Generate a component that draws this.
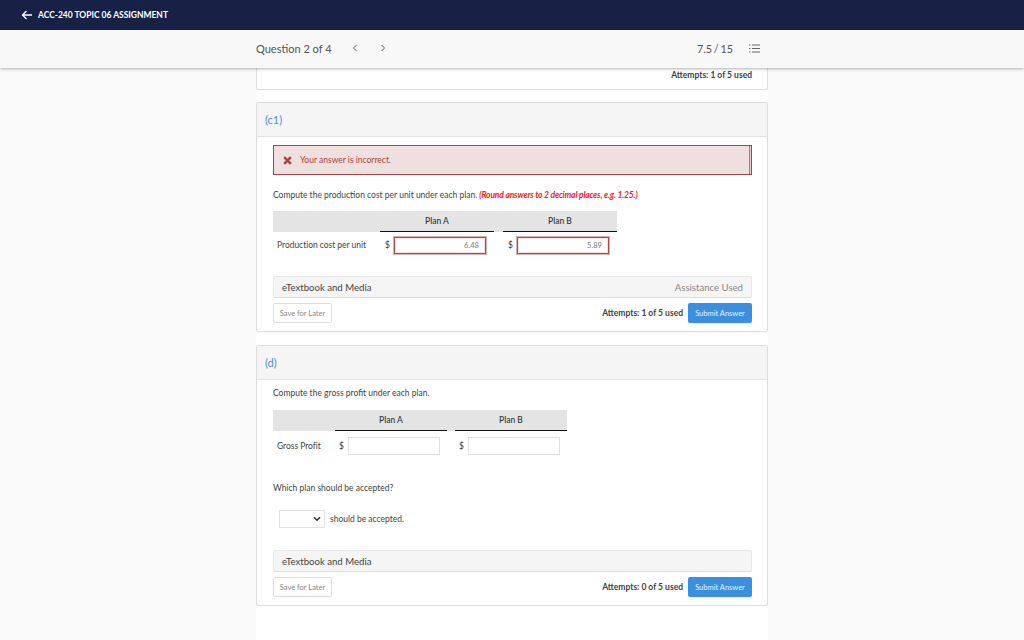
<div class="page">
  <header class="topbar">
    <svg class="back" width="12" height="10" viewBox="0 0 12 10" aria-hidden="true"><path d="M5.5 1 1.5 5l4 4M1.5 5H11" fill="none" stroke="#fff" stroke-width="1.3"/></svg>
    <span class="course">ACC-240 TOPIC 06 ASSIGNMENT</span>
  </header>

  <div class="subbar">
    <div class="subinner">
      <span class="qnum">Question 2 of 4</span>
      <svg class="chev first" width="6" height="8" viewBox="0 0 6 8" aria-hidden="true"><path d="M4.5 1 1.5 4l3 3" fill="none" stroke="#555" stroke-width="1"/></svg>
      <svg class="chev" width="6" height="8" viewBox="0 0 6 8" aria-hidden="true"><path d="M1.5 1l3 3-3 3" fill="none" stroke="#555" stroke-width="1"/></svg>
      <span class="score">7.5 / 15</span>
      <svg class="list" width="11" height="9" viewBox="0 0 11 9" aria-hidden="true"><path d="M3 1h8M3 4.5h8M3 8h8M0 1h1.5M0 4.5h1.5M0 8h1.5" fill="none" stroke="#666" stroke-width="1"/></svg>
    </div>
  </div>

  <main class="column">
    <div class="stub"><span class="attempts">Attempts: 1 of 5 used</span></div>

    <section class="card c1">
      <h2 class="cardhead">(c1)</h2>
      <div class="cardbody">
        <div class="alert">
          <svg width="9" height="9" viewBox="0 0 9 9" aria-hidden="true"><path d="M1.2 1.2l6.6 6.6M7.8 1.2l-6.6 6.6" stroke="#a94442" stroke-width="2.6" fill="none"/></svg>
          <span>Your answer is incorrect.</span>
        </div>
        <p class="prompt first">Compute the production cost per unit under each plan. <em>(Round answers to 2 decimal places, e.g. 1.25.)</em></p>

        <div class="table t1">
          <div class="thead">
            <div class="th blank"></div>
            <div class="th plan">Plan A</div>
            <div class="th sep"></div>
            <div class="th plan">Plan B</div>
          </div>
          <div class="trow">
            <div class="rowlabel">Production cost per unit</div>
            <div class="cell"><span class="dollar">$</span><div class="input bad">6.48</div></div>
            <div class="sep"></div>
            <div class="cell"><span class="dollar">$</span><div class="input bad">5.89</div></div>
          </div>
        </div>

        <div class="media"><span>eTextbook and Media</span><span class="assist">Assistance Used</span></div>
        <div class="actions">
          <button class="save">Save for Later</button>
          <span class="attempts">Attempts: 1 of 5 used</span>
          <button class="submit">Submit Answer</button>
        </div>
      </div>
    </section>

    <section class="card d">
      <h2 class="cardhead">(d)</h2>
      <div class="cardbody">
        <p class="prompt">Compute the gross profit under each plan.</p>

        <div class="table t2">
          <div class="thead">
            <div class="th blank"></div>
            <div class="th plan">Plan A</div>
            <div class="th sep"></div>
            <div class="th plan">Plan B</div>
          </div>
          <div class="trow">
            <div class="rowlabel">Gross Profit</div>
            <div class="cell"><span class="dollar">$</span><div class="input"></div></div>
            <div class="sep"></div>
            <div class="cell"><span class="dollar">$</span><div class="input"></div></div>
          </div>
        </div>

        <p class="prompt which">Which plan should be accepted?</p>
        <div class="selectrow">
          <div class="select">
            <svg width="8" height="6" viewBox="0 0 8 6" aria-hidden="true"><path d="M1 1.2 4 4.2l3-3" fill="none" stroke="#333" stroke-width="1.6"/></svg>
          </div>
          <span>should be accepted.</span>
        </div>

        <div class="media"><span>eTextbook and Media</span></div>
        <div class="actions">
          <button class="save">Save for Later</button>
          <span class="attempts">Attempts: 0 of 5 used</span>
          <button class="submit">Submit Answer</button>
        </div>
      </div>
    </section>
  </main>
</div>

<style>
  :global(body) {
    margin: 0;
    background: #fafafa;
    font-family: Lato, "Liberation Sans", sans-serif;
    color: #333;
    overflow: hidden;
  }
  .page { height: 640px; overflow: hidden; display: flex; flex-direction: column; }

  .topbar {
    height: 30px;
    flex: none;
    background: #172146;
    display: flex;
    align-items: center;
    padding-left: 21px;
    gap: 5px;
    color: #fff;
  }
  .course { font-size: 8.5px; font-weight: 700; letter-spacing: -0.02px; }
  .back { flex: none; }

  .subbar {
    height: 38px;
    flex: none;
    background: #f8f8f8;
    box-shadow: 0 1px 3px rgba(0,0,0,.3);
    position: relative;
    z-index: 2;
  }
  .subinner {
    width: 512px;
    height: 100%;
    margin: 0 auto;
    padding-bottom: 2px;
    display: flex;
    align-items: center;
    font-size: 11px;
    color: #555;
    box-sizing: border-box;
  }
  .qnum { width: 96px; flex: none; }
  .chev.first { margin-right: 22px; }
  .score { margin-left: auto; font-size: 10.8px; word-spacing: -1px; color: #555; }
  .list { margin: 0 8px 0 16px; }

  .column {
    width: 512px;
    margin: 0 auto;
    flex: 1;
    background: #fff;
    display: flex;
    flex-direction: column;
  }
  .stub {
    height: 22px;
    flex: none;
    box-sizing: border-box;
    border: 1px solid #ddd;
    border-top: 0;
    border-radius: 0 0 2px 2px;
    display: flex;
    justify-content: flex-end;
    padding: 1px 15px 0 0;
    line-height: 12px;
  }
  .attempts { font-size: 8.5px; font-weight: 700; color: #3b3f4a; white-space: nowrap; }

  .card {
    border: 1px solid #ddd;
    border-radius: 2px;
    box-sizing: border-box;
    flex: none;
  }
  .c1 { margin-top: 12px; height: 230px; }
  .d { margin-top: 13px; height: 261px; }
  .cardhead {
    margin: 0;
    height: 34px;
    box-sizing: border-box;
    background: #f5f5f5;
    border-bottom: 1px solid #e4e4e4;
    padding-left: 8px;
    font-size: 11px;
    font-weight: 400;
    color: #4a90d9;
    line-height: 34px;
  }
  .cardbody { padding: 8px 15px 0 16px; }
  .d .cardbody { padding-top: 7px; }

  .alert {
    height: 30px;
    box-sizing: border-box;
    background: #f0dfdf;
    border: 1px solid #a94442;
    border-width: 1.5px 1px;
    box-shadow: inset -1px 0 0 #e9c9c9, inset -2px 0 0 #b77;
    display: flex;
    align-items: center;
    padding-left: 9px;
    gap: 8px;
    font-size: 8.5px;
    color: #a94442;
  }
  .prompt { margin: 0; font-size: 8.5px; line-height: 12px; color: #444; }
  .prompt.first { margin-top: 14px; }
  .prompt em { color: #ee2222; font-weight: 700; letter-spacing: -0.16px; }

  .table { font-size: 8.5px; color: #444; }
  .thead { display: flex; height: 21px; }
  .th { background: #e4e4e4; }
  .th.plan {
    display: flex; align-items: center; justify-content: center;
    border-bottom: 1px solid #111;
    font-weight: 500; color: #333; box-sizing: border-box;
  }
  .trow { display: flex; align-items: center; }
  .rowlabel { padding-left: 4px; box-sizing: border-box; white-space: nowrap; letter-spacing: -0.03px; }
  .cell { display: flex; align-items: center; box-sizing: border-box; }
  .dollar { font-size: 8.5px; color: #333; }
  .input {
    box-sizing: border-box;
    background: #fff;
    border: 1px solid #e2e2e2;
    text-align: right;
    font-size: 7.5px;
    color: #777;
  }

  .t1 { margin-top: 10px; width: 344px; }
  .t1 .th.blank, .t1 .rowlabel { width: 107px; flex: none; }
  .t1 .th.plan, .t1 .cell { width: 114px; flex: none; }
  .t1 .th.sep, .t1 .sep { width: 9px; flex: none; }
  .t1 .trow { height: 26px; }
  .t1 .cell { padding-left: 5px; gap: 4px; }
  .t1 .input { width: 92px; height: 17px; line-height: 15px; padding-right: 6px; }
  .input.bad { border: 1px solid #a8504e; box-shadow: inset 0 0 0 1px #f3e2e2, 0 0 0 1px #d9b1b0; }

  .t2 { margin-top: 11px; width: 293px; }
  .t2 .th.blank, .t2 .rowlabel { width: 62px; flex: none; }
  .t2 .th.plan, .t2 .cell { width: 112px; flex: none; }
  .t2 .th.sep, .t2 .sep { width: 8px; flex: none; }
  .t2 .trow { height: 29px; }
  .t2 .cell { padding-left: 4px; gap: 4px; }
  .t2 .input { width: 92px; height: 18px; }

  .which { margin-top: 22px; }
  .selectrow {
    margin: 16px 0 0 6px;
    display: flex; align-items: center; gap: 5px;
    font-size: 8.5px; color: #444;
  }
  .select {
    width: 46px; height: 18px; box-sizing: border-box;
    border: 1px solid #e2e2e2; background: #fff;
    display: flex; align-items: center; justify-content: flex-end; padding-right: 3px;
  }

  .media {
    height: 22px; box-sizing: border-box;
    background: #f5f5f5;
    border: 1px solid #e8e8e8;
    border-bottom: 1px solid #ddd;
    border-radius: 2px;
    display: flex; align-items: center; justify-content: space-between;
    padding: 0 8px;
    font-size: 9.6px; color: #444;
  }
  .c1 .media { margin-top: 18px; }
  .d .media { margin-top: 22px; }
  .assist { color: #888; }

  .actions { display: flex; align-items: center; margin-top: 5px; }
  .save {
    width: 59px; height: 20px; box-sizing: border-box; padding: 0;
    background: #fff; border: 1px solid #ddd; border-radius: 2px;
    font: 400 7.5px Lato, sans-serif; color: #888;
    margin-right: auto;
  }
  .actions .attempts { margin-right: 5px; }
  .submit {
    width: 64px; height: 20px; box-sizing: border-box; padding: 0;
    background: #3b8fe0; border: 0; border-radius: 2px;
    font: 400 7.5px Lato, sans-serif; color: #e8f1fb;
  }
</style>
